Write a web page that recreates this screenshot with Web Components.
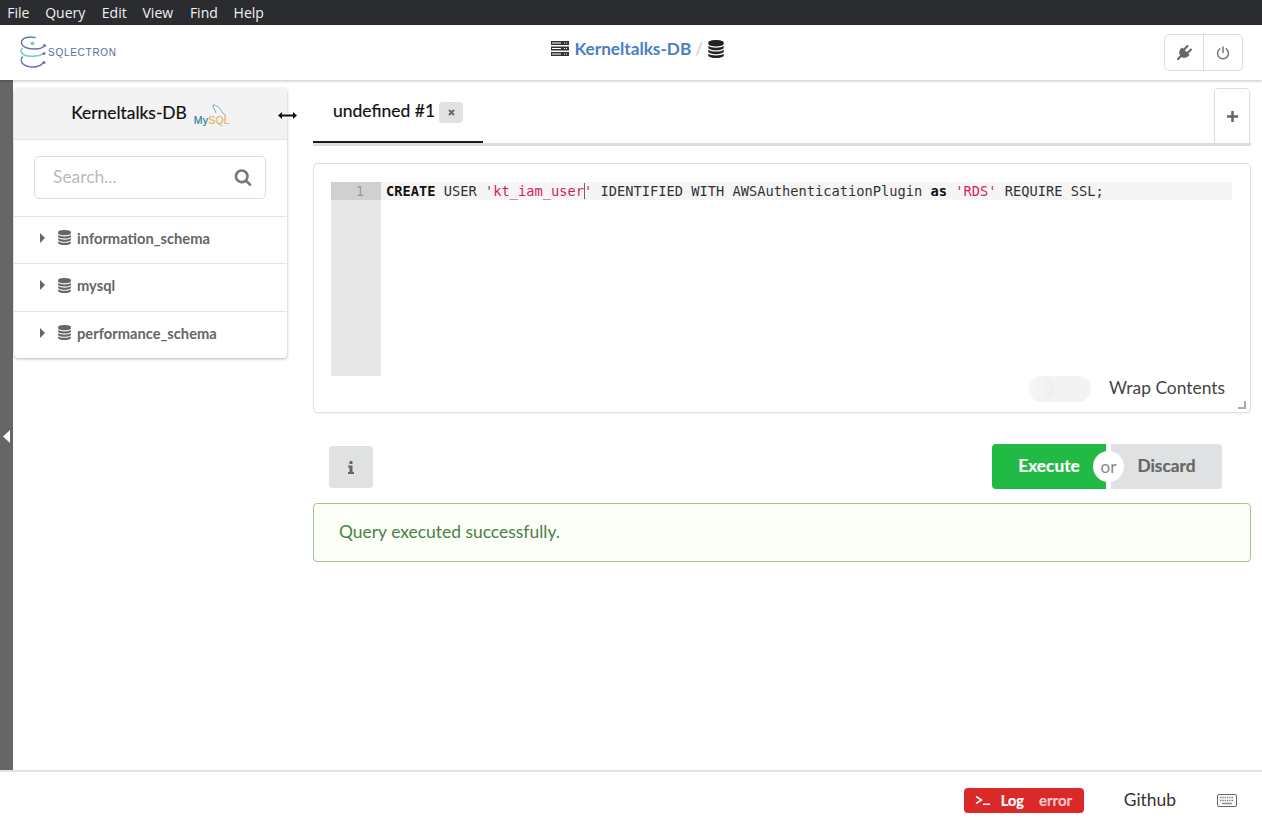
<!DOCTYPE html>
<html>
<head>
<meta charset="utf-8">
<title>Sqlectron</title>
<style>
  html, body { margin: 0; height: 100%; }
  body {
    width: 1262px;
    height: 828px;
    overflow: hidden;
    display: flex;
    flex-direction: column;
    font-family: Lato, "Liberation Sans", sans-serif;
    background: #fff;
  }
  .middle { flex: 1; display: flex; min-height: 0; }
</style>
</head>
<body>
  <app-menubar></app-menubar>
  <app-header></app-header>
  <div class="middle">
    <side-rail></side-rail>
    <db-sidebar>
      <db-item>information_schema</db-item>
      <db-item class="mid">mysql</db-item>
      <db-item>performance_schema</db-item>
    </db-sidebar>
    <query-panel></query-panel>
  </div>
  <app-footer></app-footer>

<script>
// shared icon paths (font-awesome shapes, 1792 grid)
const ICONS = {
  database: 'M896 768q237 0 443-43t325-127v170q0 69-103 128t-280 93.5-385 34.5-385-34.5-280-93.5-103-128v-170q119 84 325 127t443 43zm0 768q237 0 443-43t325-127v170q0 69-103 128t-280 93.5-385 34.5-385-34.5-280-93.5-103-128v-170q119 84 325 127t443 43zm0-384q237 0 443-43t325-127v170q0 69-103 128t-280 93.5-385 34.5-385-34.5-280-93.5-103-128v-170q119 84 325 127t443 43zm0-1152q208 0 385 34.5t280 93.5 103 128v128q0 69-103 128t-280 93.5-385 34.5-385-34.5-280-93.5-103-128v-128q0-69 103-128t280-93.5 385-34.5z',
  search: 'M1216 832q0-185-131.5-316.5t-316.5-131.5-316.5 131.5-131.5 316.5 131.5 316.5 316.5 131.5 316.5-131.5 131.5-316.5zm512 832q0 52-38 90t-90 38q-54 0-90-38l-343-342q-179 124-399 124-143 0-273.5-55.5t-225-150-150-225-55.5-273.5 55.5-273.5 150-225 225-150 273.5-55.5 273.5 55.5 225 150 150 225 55.5 273.5q0 220-124 399l343 343q37 37 37 90z',
  plug: 'M1755 453q37 38 37 90.5t-37 90.5l-401 400 150 150-160 160q-163 163-389.5 186.5t-411.5-100.5l-362 362h-181v-181l362-362q-124-185-100.5-411.5t186.5-389.5l160-160 150 150 400-401q38-37 91-37t90 37 37 90.5-37 90.5l-400 401 234 234 401-400q38-37 91-37t90 37z'
};
const faIcon = (name, size, color) =>
  `<svg width="${size}" height="${size}" viewBox="0 0 1792 1792" fill="${color}"><path d="${ICONS[name]}"/></svg>`;

// top menu bar
const menubarTpl = document.createElement('template');
menubarTpl.innerHTML = `
  <style>
    :host {
      display: flex;
      flex: none;
      height: 25px;
      background: #2a2c30;
      color: #f2f2f2;
      font: 14px/25px "Open Sans", sans-serif;
      padding-left: 8px;
      gap: 15.800px;
    }
    span { display: block; }
    span:nth-child(2) { margin-left: -.8px; }
    span:nth-child(4) { margin-left: .8px; }
    span:nth-child(6) { margin-left: 1px; }
  </style>
  <span>File</span><span>Query</span><span>Edit</span><span>View</span><span>Find</span><span>Help</span>
`;
class AppMenubar extends HTMLElement {
  constructor() {
    super();
    this.attachShadow({ mode: 'open' });
    this.shadowRoot.appendChild(menubarTpl.content.cloneNode(true));
  }
}
customElements.define('app-menubar', AppMenubar);

// logo, breadcrumb, connection buttons
const headerTpl = document.createElement('template');
headerTpl.innerHTML = `
  <style>
    :host {
      display: grid;
      grid-template-columns: 1fr auto 1fr;
      align-items: center;
      flex: none;
      height: 55px;
      background: #fff;
      box-shadow: 0 1px 3px rgba(0,0,0,.25);
      position: relative;
      z-index: 2;
    }
    .logo { display: flex; align-items: center; padding-left: 19px; }
    .logo span {
      font: 10px "Liberation Sans", sans-serif;
      letter-spacing: .73px;
      color: #5a6a9f;
    }
    .crumb {
      display: flex;
      align-items: center;
      font-size: 17.200px;
      font-weight: 700;
      color: #4a7fc4;
      height: 55px;
      padding-bottom: 8px;
      margin-left: 14.400px;
      box-sizing: border-box;
    }
    .crumb .sep { color: #ccc; font-weight: 400; margin: 0 4px; }
    .crumb .name { margin-left: 5px; }
    .btns {
      justify-self: end;
      margin-right: 19px;
      display: flex;
      width: 79px;
      height: 37px;
      box-sizing: border-box;
      border: 1px solid #ddd;
      border-radius: 5px;
    }
    .btns div { flex: 1; display: flex; align-items: center; justify-content: center; }
    .btns div + div { border-left: 1px solid #ddd; }
  </style>
  <div class="logo">
    <svg width="29" height="36" viewBox="0 0 29 36" fill="none" stroke-width="1.500" stroke-linecap="round">
      <path d="M16 2.500C9 1 2.500 3 2.500 7.500S9 14 16 14c4 0 7-.8 8.500-2.500" stroke="#6a78ad"/>
      <path d="M3 13.500c-1.500 1.500-1.500 3 0 4.500 2 3 8 3.500 13 3 4-.3 7-1.200 8-2.500" stroke="#6fcfca"/>
      <path d="M3.500 22c-2 2-1.500 5 .5 7 3 3 10 3.500 14 2.500 3-.7 5-2 6-3.500" stroke="#6a78ad"/>
      <circle cx="13.500" cy="8.300" r="1.900" fill="#6fcfca" stroke="none"/>
      <circle cx="25.500" cy="10.500" r="1.500" fill="#6a78ad" stroke="none"/>
      <circle cx="25" cy="18.500" r="1.500" fill="#6a78ad" stroke="none"/>
      <circle cx="25" cy="27.500" r="1.500" fill="#6a78ad" stroke="none"/>
    </svg>
    <span>SQLECTRON</span>
  </div>
  <div class="crumb">
    <svg width="18" height="15" viewBox="0 0 18 15">
      <path fill="#333" d="M0 0h18v4H0zM0 5.500h18v4H0zM0 11h18v4H0z"/>
      <path fill="#fff" d="M1 1.500h9v1H1zM1 7h9v1H1zM1 12.500h9v1H1z"/>
      <path fill="#fff" d="M13 1.500h1v1h-1zM15 1.500h1v1h-1zM13 7h1v1h-1zM15 7h1v1h-1zM13 12.500h1v1h-1zM15 12.500h1v1h-1z"/>
    </svg>
    <span class="name">Kerneltalks-DB</span>
    <span class="sep">/</span>
    ${faIcon('database', 18, '#222')}
  </div>
  <div class="btns">
    <div>${faIcon('plug', 15, '#666')}</div>
    <div>
      <svg width="14" height="14" viewBox="0 0 14 14" fill="none" stroke="#777" stroke-width="1.500" stroke-linecap="round">
        <path d="M3.800 2.900a5.500 5.500 0 1 0 6.400 0M7 1v5.500"/>
      </svg>
    </div>
  </div>
`;
class AppHeader extends HTMLElement {
  constructor() {
    super();
    this.attachShadow({ mode: 'open' });
    this.shadowRoot.appendChild(headerTpl.content.cloneNode(true));
  }
}
customElements.define('app-header', AppHeader);

// collapsed strip on the far left
const railTpl = document.createElement('template');
railTpl.innerHTML = `
  <style>
    :host {
      display: flex;
      flex: none;
      width: 13px;
      background: #666;
      align-items: center;
      justify-content: center;
      padding-top: 22px;
      box-sizing: border-box;
    }
  </style>
  <svg width="7" height="13" viewBox="0 0 7 13"><path fill="#fff" d="M7 0v13L0 6.500z"/></svg>
`;
class SideRail extends HTMLElement {
  constructor() {
    super();
    this.attachShadow({ mode: 'open' });
    this.shadowRoot.appendChild(railTpl.content.cloneNode(true));
  }
}
customElements.define('side-rail', SideRail);

// database list card
const sidebarTpl = document.createElement('template');
sidebarTpl.innerHTML = `
  <style>
    :host {
      display: block;
      flex: none;
      width: 300px;
      box-sizing: border-box;
      padding: 8px 26px 0 1px;
      position: relative;
    }
    .card {
      border-radius: 4px;
      background: #fff;
      box-shadow: 0 1px 3px rgba(0,0,0,.3);
      overflow: hidden;
    }
    .head {
      display: flex;
      align-items: center;
      justify-content: center;
      height: 52px;
      background: #f3f3f3;
      font-size: 17.400px;
      color: #111;
      box-sizing: border-box;
      padding-bottom: 2px;
      border-bottom: 1px solid #e4e4e4;
      -webkit-text-stroke: .2px #111;
    }
    .brand { position: relative; display: block; width: 37px; height: 20px; margin-left: 6px; margin-top: 2px; }
    .brand svg { position: absolute; left: 19px; top: 0; }
    .brand b {
      position: absolute;
      left: 1px;
      top: 10px;
      font: 400 10.500px "Liberation Sans", sans-serif;
      letter-spacing: .2px;
      color: #2b7ea8;
      -webkit-text-stroke: .2px #2b7ea8;
    }
    .brand i { font-style: normal; color: #e8b264; -webkit-text-stroke: .2px #e8b264; }
    .search {
      padding: 16px 21px 17px 20px;
      border-bottom: 1px solid #e4e4e4;
    }
    .box {
      height: 43px;
      box-sizing: border-box;
      border: 1px solid #ddd;
      border-radius: 5px;
      display: flex;
      align-items: center;
      justify-content: space-between;
      padding: 0 13px 0 18px;
      font-size: 17.400px;
      color: #bbb;
    }
    .box span { padding-bottom: 3px; }
    .box svg { margin-top: -1px; }
    .drag { position: absolute; left: 265px; top: 31px; }
  </style>
  <div class="card">
    <div class="head">
      Kerneltalks-DB
      <span class="brand">
        <svg width="16" height="14" viewBox="0 0 16 14" fill="none" stroke="#7fa9bd" stroke-width="1">
          <path d="M1 1c4 0 7 3 9 7l4 4M1 1c0 3 2 5 3 8"/>
        </svg>
        <b>My<i>SQL</i></b>
      </span>
    </div>
    <div class="search">
      <div class="box">
        <span>Search...</span>
        ${faIcon('search', 18, '#777')}
      </div>
    </div>
    <slot></slot>
  </div>
  <svg class="drag" width="19" height="9" viewBox="0 0 19 9">
    <path fill="#111" d="M0 4.500 4 1v2.500h11V1l4 3.500L15 8V5.500H4V8z"/>
  </svg>
`;
class DbSidebar extends HTMLElement {
  constructor() {
    super();
    this.attachShadow({ mode: 'open' });
    this.shadowRoot.appendChild(sidebarTpl.content.cloneNode(true));
  }
}
customElements.define('db-sidebar', DbSidebar);

// a row in the database list
const itemTpl = document.createElement('template');
itemTpl.innerHTML = `
  <style>
    :host {
      display: flex;
      align-items: center;
      height: 47px;
      padding: 0 0 5px 26px;
      box-sizing: border-box;
      font-size: 14.700px;
      font-weight: 700;
      color: #666;
      border-bottom: 1px solid #e4e4e4;
    }
    :host(.mid) { height: 48px; }
    :host(:last-child) { border-bottom: 0; height: 46px; padding-bottom: 5px; }
    svg { flex: none; }
    .db { display: flex; margin: 0 5px 0 12px; }
  </style>
  <svg width="5" height="10" viewBox="0 0 5 10"><path fill="#666" d="M0 0l5 5-5 5z"/></svg>
  <span class="db"></span>
  <slot></slot>
`;
class DbItem extends HTMLElement {
  constructor() {
    super();
    this.attachShadow({ mode: 'open' });
    this.shadowRoot.appendChild(itemTpl.content.cloneNode(true));
    this.shadowRoot.querySelector('.db').innerHTML = faIcon('database', 15, '#666');
  }
}
customElements.define('db-item', DbItem);

// tabs, editor, actions, result message
const panelTpl = document.createElement('template');
panelTpl.innerHTML = `
  <style>
    :host {
      display: block;
      flex: 1;
      min-width: 0;
      box-sizing: border-box;
      padding: 8px 11px 0 0;
    }
    .tabs {
      display: flex;
      height: 58px;
      box-sizing: border-box;
      border-bottom: 3px solid #ddd;
    }
    .tab {
      width: 170px;
      height: 55px;
      box-sizing: border-box;
      border-bottom: 2px solid #1b1c1d;
      display: flex;
      align-items: center;
      padding: 0 0 8px 20px;
      font-size: 17.500px;
      color: #111;
      -webkit-text-stroke: .2px #111;
    }
    .close {
      width: 24px;
      height: 21px;
      border-radius: 4px;
      background: #e0e1e2;
      margin-left: 4px;
      margin-top: 3px;
      display: flex;
      align-items: center;
      justify-content: center;
    }
    .plus {
      margin-left: auto;
      margin-right: 1px;
      width: 36px;
      height: 55px;
      box-sizing: border-box;
      border: 1px solid #ddd;
      border-bottom: 0;
      border-radius: 5px 5px 0 0;
      display: flex;
      align-items: center;
      justify-content: center;
    }
    .editor {
      margin: 18px 1px 0;
      height: 248px;
      box-sizing: border-box;
      border-radius: 4px;
      box-shadow: 0 0 0 1px #e0e0e0, 0 1px 2px rgba(0,0,0,.15);
      padding: 18px 18px 0 17px;
      position: relative;
    }
    .ace { display: flex; height: 194px; }
    .gutter { width: 50px; flex: none; background: #e8e8e8; }
    .gutter div {
      height: 18px;
      background: #d0d0d0;
      color: #999;
      text-align: right;
      padding-right: 17px;
      box-sizing: border-box;
    }
    .code { flex: 1; min-width: 0; }
    .line {
      height: 18px;
      background: #f5f5f5;
      padding-left: 5px;
      color: #333;
      white-space: pre;
    }
    .ace, .gutter div, .line { font: 13.710px/18px "DejaVu Sans Mono", monospace; }
    .kw { font-weight: 700; color: #111; }
    .str { color: #d81b60; }
    .caret { border-left: 1px solid #666; margin-right: -1px; }
    .wrap {
      display: flex;
      align-items: center;
      justify-content: flex-end;
      height: 26px;
      padding-right: 7px;
      font-size: 17.400px;
      color: #444;
    }
    .wrap span { padding-bottom: 4px; }
    .toggle {
      width: 62px;
      height: 26px;
      border-radius: 13px;
      background: #f3f3f3;
      margin-right: 18px;
    }
    .toggle div {
      width: 26px;
      height: 26px;
      border-radius: 50%;
      background: linear-gradient(90deg, #f7f7f7, #eeeeee);
    }
    .grip { position: absolute; right: 4px; bottom: 3px; }
    .actions {
      display: flex;
      align-items: center;
      justify-content: space-between;
      margin-top: 32px;
      padding: 0 29px 0 16px;
    }
    .info {
      width: 44px;
      height: 42px;
      border-radius: 4px;
      background: #e0e1e2;
      display: flex;
      align-items: center;
      justify-content: center;
      margin-top: 1px;
    }
    .group { display: flex; height: 45px; position: relative; font-size: 17.300px; font-weight: 700; }
    .group span { padding-bottom: 2px; -webkit-text-stroke: .2px; }
    .exec {
      width: 114px;
      background: #21ba45;
      color: #fff;
      border-radius: 4px 0 0 4px;
      display: flex;
      align-items: center;
      justify-content: center;
      margin-right: 5px;
    }
    .disc {
      width: 111px;
      background: #e0e1e2;
      color: #666;
      border-radius: 0 4px 4px 0;
      display: flex;
      align-items: center;
      justify-content: center;
    }
    .or {
      position: absolute;
      left: 101px;
      top: 7px;
      width: 31px;
      height: 31px;
      border-radius: 50%;
      background: #fff;
      display: flex;
      align-items: center;
      justify-content: center;
      font-weight: 400;
      font-size: 17px;
      color: #888;
    }
    .msg {
      margin-top: 14px;
      height: 59px;
      box-sizing: border-box;
      border: 1px solid #a3c293;
      border-radius: 4px;
      background: #fcfff5;
      color: #4a7f4b;
      font-size: 17.450px;
      display: flex;
      align-items: center;
      padding: 0 0 3px 25px;
    }
  </style>
  <div class="tabs">
    <div class="tab">
      undefined #1
      <span class="close">
        <svg width="7" height="7" viewBox="0 0 7 7" stroke="#666" stroke-width="1.800"><path d="M1 1l5 5M6 1L1 6"/></svg>
      </span>
    </div>
    <div class="plus">
      <svg width="11" height="11" viewBox="0 0 11 11" stroke="#666" stroke-width="2.500"><path d="M5.500 0v11M0 5.500h11"/></svg>
    </div>
  </div>
  <div class="editor">
    <div class="ace">
      <div class="gutter"><div>1</div></div>
      <div class="code"><div class="line"><span class="kw">CREATE</span> USER <span class="str">'kt_iam_user<span class="caret"></span>'</span> IDENTIFIED WITH AWSAuthenticationPlugin <span class="kw">as</span> <span class="str">'RDS'</span> REQUIRE SSL;</div></div>
    </div>
    <div class="wrap"><div class="toggle"><div></div></div><span>Wrap Contents</span></div>
    <svg class="grip" width="8" height="8" viewBox="0 0 8 8"><path fill="#aaa" d="M6 0h2v8H0V6h6z"/></svg>
  </div>
  <div class="actions">
    <div class="info">
      <svg width="6" height="13" viewBox="0 0 6 13"><path fill="#666" d="M1.500 0h3v3h-3zM0 4.500h4.500V11H6v2H0v-2h1.500V6.500H0z"/></svg>
    </div>
    <div class="group">
      <div class="exec"><span>Execute</span></div>
      <div class="disc"><span>Discard</span></div>
      <div class="or">or</div>
    </div>
  </div>
  <div class="msg">Query executed successfully.</div>
`;
class QueryPanel extends HTMLElement {
  constructor() {
    super();
    this.attachShadow({ mode: 'open' });
    this.shadowRoot.appendChild(panelTpl.content.cloneNode(true));
  }
}
customElements.define('query-panel', QueryPanel);

// bottom status bar
const footerTpl = document.createElement('template');
footerTpl.innerHTML = `
  <style>
    :host {
      display: flex;
      flex: none;
      align-items: center;
      justify-content: flex-end;
      height: 58px;
      box-sizing: border-box;
      border-top: 2px solid #e2e2e2;
      padding: 1px 25px 0 0;
    }
    .log {
      width: 120px;
      height: 25px;
      box-sizing: border-box;
      border-radius: 4px;
      background: #db2828;
      display: flex;
      align-items: center;
      padding: 0 0 1px 11px;
      color: #fff;
      font-size: 14.500px;
      font-weight: 700;
    }
    .log .txt { margin-left: 11px; -webkit-text-stroke: .2px #fff; }
    .log .err { margin-left: 15px; color: #f6c6c6; font-size: 15px; -webkit-text-stroke: .2px #f6c6c6; }
    .gh { font-size: 17.400px; color: #333; margin: 0 41px 0 40px; padding-bottom: 2px; }
  </style>
  <div class="log">
    <svg width="15" height="10" viewBox="0 0 15 10" fill="none" stroke="#fff" stroke-width="1.500">
      <path d="M1 1.500 6.500 5 1 8.500M8 9.300h7"/>
    </svg>
    <span class="txt">Log</span><span class="err">error</span>
  </div>
  <span class="gh">Github</span>
  <svg width="20" height="13" viewBox="0 0 20 13">
    <rect x=".5" y=".5" width="19" height="12" rx="1.500" fill="#fff" stroke="#666"/>
    <path stroke="#888" stroke-width="1.500" stroke-dasharray="1.500 .8" fill="none" d="M3 3.500h14M3 6.500h14"/>
    <path stroke="#888" stroke-width="1.500" fill="none" d="M5 9.500h10"/>
  </svg>
`;
class AppFooter extends HTMLElement {
  constructor() {
    super();
    this.attachShadow({ mode: 'open' });
    this.shadowRoot.appendChild(footerTpl.content.cloneNode(true));
  }
}
customElements.define('app-footer', AppFooter);
</script>
</body>
</html>
